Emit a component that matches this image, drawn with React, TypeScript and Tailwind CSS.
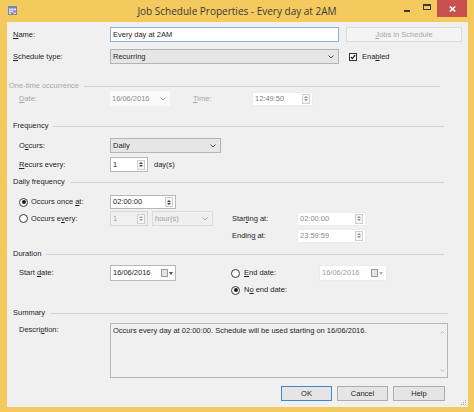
import React from "react";

function Chevron({ color = "#4a4a4a" }: { color?: string }) {
  return (
    <svg width="6" height="4" viewBox="0 0 6 4">
      <path d="M0.5 0.5 L3 3 L5.5 0.5" fill="none" stroke={color} strokeWidth="1" />
    </svg>
  );
}

function SpinArrows({ color = "#404040" }: { color?: string }) {
  return (
    <div className="flex flex-col items-center justify-center gap-[1px] w-[8px] h-[10px] border border-[#cfcfcf] bg-[#f6f6f6]">
      <svg width="4" height="2" viewBox="0 0 4 2">
        <path d="M0 2 L2 0 L4 2Z" fill={color} />
      </svg>
      <svg width="4" height="2" viewBox="0 0 4 2">
        <path d="M0 0 L2 2 L4 0Z" fill={color} />
      </svg>
    </div>
  );
}

function Radio({ checked }: { checked?: boolean }) {
  return (
    <div className="w-[9px] h-[9px] rounded-full border border-[#3a3a3a] bg-white flex items-center justify-center shrink-0">
      {checked && <div className="w-[4px] h-[4px] rounded-full bg-[#1a1a1a]" />}
    </div>
  );
}

function CalIcon({ color = "#8a8a8a" }: { color?: string }) {
  return (
    <div className="flex items-center gap-[1px]">
      <div className="w-[7px] h-[8px] border border-[#9a9a9a] bg-[#e4e4e4]" />
      <svg width="4" height="3" viewBox="0 0 4 3">
        <path d="M0 0 L2 3 L4 0Z" fill={color} />
      </svg>
    </div>
  );
}

function GroupHeader({
  label,
  disabled,
  pl,
  pr,
  mt,
}: {
  label: string;
  disabled?: boolean;
  pl: string;
  pr: string;
  mt: string;
}) {
  return (
    <div className={`flex items-center h-[10px] ${pl} ${pr} ${mt}`}>
      <span className={disabled ? "text-[#a8a8a8]" : "text-[#1e1e1e]"}>{label}</span>
      <div className="flex-1 h-px bg-[#d3d3d3] ml-[5px]" />
    </div>
  );
}

export default function App() {
  return (
    <div className="w-[474px] h-[412px] bg-[#f4c95e] flex flex-col font-['Liberation_Sans',Arial,sans-serif] text-[7.5px] leading-none text-[#1e1e1e] overflow-hidden">
      {/* Title bar */}
      <div className="grid grid-cols-[1fr_auto_1fr] h-[22px] shrink-0">
        <div className="flex items-start pl-[8px] pt-[6px]">
          <svg width="9" height="9" viewBox="0 0 9 9">
            <rect x="0.5" y="0.5" width="8" height="8" fill="#dfe8f5" stroke="#6f86b8" />
            <rect x="0.5" y="0.5" width="8" height="2" fill="#6f86b8" />
            <path d="M3 2.5 V8.5 M5.5 2.5 V8.5 M0.5 4.5 H8.5 M0.5 6.5 H8.5" stroke="#8fa2c9" strokeWidth="0.6" />
            <rect x="5.7" y="4.7" width="2" height="1.6" fill="#d9534f" />
            <rect x="3.2" y="6.7" width="2" height="1.6" fill="#d9534f" />
          </svg>
        </div>
        <div className="flex items-center justify-center font-['Open_Sans',sans-serif] text-[10px] text-[#3a3a3a] pb-[1px]">
          Job Schedule Properties - Every day at 2AM
        </div>
        <div className="flex justify-end items-start pr-[7px]">
          <div className="w-[16px] h-[17px] flex items-center justify-center mr-[4px]">
            <div className="w-[6px] h-[2px] bg-[#3a3a3a] mt-[4px]" />
          </div>
          <div className="w-[16px] h-[14px] flex items-center justify-center mr-[2px]">
            <div className="w-[8px] h-[6px] border border-[#3a3a3a] border-t-2" />
          </div>
          <div className="w-[30px] h-[17px] bg-[#c9504f] flex items-center justify-center">
            <svg width="7" height="6" viewBox="0 0 7 6">
              <path d="M0.8 0.5 L6.2 5.5 M6.2 0.5 L0.8 5.5" stroke="white" strokeWidth="1.6" />
            </svg>
          </div>
        </div>
      </div>

      {/* Content */}
      <div className="relative flex flex-col ml-[7px] mr-[6px] h-[385px] bg-[#f0f0f0] pt-[5px]">
        {/* Name */}
        <div className="flex items-center h-[15px]">
          <div className="w-[103px] pl-[6px]">
            <u>N</u>ame:
          </div>
          <div className="w-[229px] h-[15px] bg-white border border-[#8eb1dc] flex items-center pl-[2px]">
            Every day at 2AM
          </div>
          <div className="ml-[7px] w-[116px] h-[15px] bg-[#f4f4f4] border border-[#dcdcdc] flex items-center justify-center text-[#a8a8a8]">
            <span>
              <u>J</u>obs in Schedule
            </span>
          </div>
        </div>

        {/* Schedule type */}
        <div className="flex items-center h-[15px] mt-[7px]">
          <div className="w-[103px] pl-[6px]">
            <u>S</u>chedule type:
          </div>
          <div className="w-[229px] h-[15px] bg-[#e6e6e6] border border-[#b4b4b4] flex items-center justify-between pl-[2px] pr-[4px]">
            <span>Recurring</span>
            <Chevron />
          </div>
          <div className="ml-[10px] w-[8px] h-[8px] border border-[#333] bg-white flex items-center justify-center">
            <svg width="6" height="6" viewBox="0 0 6 6">
              <path d="M0.8 3 L2.3 4.6 L5.2 1" fill="none" stroke="#1a1a1a" strokeWidth="1.2" />
            </svg>
          </div>
          <span className="ml-[5px]">
            Ena<u>b</u>led
          </span>
        </div>

        {/* One-time occurrence */}
        <GroupHeader label="One-time occurrence" disabled pl="pl-[2px]" pr="pr-[28px]" mt="mt-[17px]" />
        <div className="flex items-center h-[15px]">
          <div className="w-[103px] pl-[12px] text-[#a8a8a8]">
            <u>D</u>ate:
          </div>
          <div className="w-[60px] h-[15px] bg-[#fafafa] flex items-center justify-between pl-[2px] pr-[4px] text-[#8c8c8c]">
            <span>16/06/2016</span>
            <Chevron color="#a0a0a0" />
          </div>
          <div className="ml-[23px] w-[59px] text-[#a8a8a8]">
            <u>T</u>ime:
          </div>
          <div className="w-[61px] h-[14px] bg-white border border-[#ececec] flex items-center justify-between pl-[2px] pr-[2px] text-[#7c7c7c]">
            <span>12:49:50</span>
            <SpinArrows color="#909090" />
          </div>
        </div>

        {/* Frequency */}
        <GroupHeader label="Frequency" pl="pl-[6px]" pr="pr-[24px]" mt="mt-[15px]" />
        <div className="flex items-center h-[15px] mt-[7px]">
          <div className="w-[103px] pl-[12px]">
            O<u>c</u>curs:
          </div>
          <div className="w-[111px] h-[15px] bg-[#e6e6e6] border border-[#b4b4b4] flex items-center justify-between pl-[2px] pr-[4px]">
            <span>Daily</span>
            <Chevron />
          </div>
        </div>
        <div className="flex items-center h-[15px] mt-[4px]">
          <div className="w-[103px] pl-[12px]">
            <u>R</u>ecurs every:
          </div>
          <div className="w-[38px] h-[15px] bg-white border border-[#b8b8b8] flex items-center justify-between pl-[2px] pr-[2px]">
            <span>1</span>
            <SpinArrows />
          </div>
          <span className="ml-[6px]">day(s)</span>
        </div>

        {/* Daily frequency */}
        <GroupHeader label="Daily frequency" pl="pl-[6px]" pr="pr-[24px]" mt="mt-[5px]" />
        <div className="flex items-center h-[14px] mt-[8px]">
          <div className="w-[103px] pl-[12px] flex items-center">
            <Radio checked />
            <span className="ml-[3px]">
              Occurs once <u>a</u>t:
            </span>
          </div>
          <div className="w-[66px] h-[14px] bg-white border border-[#b8b8b8] flex items-center justify-between pl-[2px] pr-[2px]">
            <span>02:00:00</span>
            <SpinArrows />
          </div>
        </div>
        <div className="flex items-center h-[15px] mt-[2px]">
          <div className="w-[103px] pl-[12px] flex items-center">
            <Radio />
            <span className="ml-[3px]">
              Occurs e<u>v</u>ery:
            </span>
          </div>
          <div className="w-[38px] h-[15px] bg-[#f0f0f0] border border-[#d6d6d6] flex items-center justify-between pl-[2px] pr-[2px] text-[#a0a0a0]">
            <span>1</span>
            <SpinArrows color="#a0a0a0" />
          </div>
          <div className="ml-[4px] w-[61px] h-[15px] bg-[#efefef] border border-[#dcdcdc] flex items-center justify-between pl-[2px] pr-[4px] text-[#a0a0a0]">
            <span>hour(s)</span>
            <Chevron color="#b0b0b0" />
          </div>
          <div className="ml-[19px] w-[65px]">
            Star<u>t</u>ing at:
          </div>
          <div className="w-[69px] h-[14px] bg-white border border-[#ececec] flex items-center justify-between pl-[2px] pr-[2px] text-[#8a8a8a]">
            <span>02:00:00</span>
            <SpinArrows color="#909090" />
          </div>
        </div>
        <div className="flex items-center h-[15px] mt-[2px] pl-[225px]">
          <div className="w-[65px]">
            Endin<u>g</u> at:
          </div>
          <div className="w-[69px] h-[14px] bg-white border border-[#ececec] flex items-center justify-between pl-[2px] pr-[2px] text-[#8a8a8a]">
            <span>23:59:59</span>
            <SpinArrows color="#909090" />
          </div>
        </div>

        {/* Duration */}
        <GroupHeader label="Duration" pl="pl-[6px]" pr="pr-[24px]" mt="mt-[6px]" />
        <div className="flex items-center h-[16px] mt-[6px]">
          <div className="w-[103px] pl-[12px]">
            Start <u>d</u>ate:
          </div>
          <div className="w-[66px] h-[16px] bg-white border border-[#b8b8b8] flex items-center justify-between pl-[2px] pr-[2px]">
            <span>16/06/2016</span>
            <CalIcon color="#505050" />
          </div>
          <div className="ml-[55px] flex items-center w-[88px]">
            <Radio />
            <span className="ml-[4px]">
              <u>E</u>nd date:
            </span>
          </div>
          <div className="w-[68px] h-[16px] bg-white border border-[#ececec] flex items-center justify-between pl-[2px] pr-[3px] text-[#a0a0a0]">
            <span>16/06/2016</span>
            <CalIcon color="#b0b0b0" />
          </div>
        </div>
        <div className="flex items-center h-[14px] mt-[2px] pl-[224px]">
          <Radio checked />
          <span className="ml-[4px]">
            N<u>o</u> end date:
          </span>
        </div>

        {/* Summary */}
        <GroupHeader label="Summary" pl="pl-[6px]" pr="pr-[20px]" mt="mt-[11px]" />
        <div className="flex items-start h-[55px] mt-[5px]">
          <div className="w-[103px] pl-[12px] pt-[3px]">
            Descri<u>p</u>tion:
          </div>
          <div className="w-[338px] h-[55px] bg-[#f0f0f0] border border-[#b6b6b6] flex justify-between pl-[2px] pt-[3px]">
            <span>Occurs every day at 02:00:00. Schedule will be used starting on 16/06/2016.</span>
            <div className="flex flex-col justify-between items-center w-[10px] pt-[4px] pb-[5px]">
              <svg width="5" height="3" viewBox="0 0 5 3">
                <path d="M0.5 2.5 L2.5 0.5 L4.5 2.5" fill="none" stroke="#c2c2c2" strokeWidth="1" />
              </svg>
              <svg width="5" height="3" viewBox="0 0 5 3">
                <path d="M0.5 0.5 L2.5 2.5 L4.5 0.5" fill="none" stroke="#c2c2c2" strokeWidth="1" />
              </svg>
            </div>
          </div>
        </div>

        {/* Buttons */}
        <div className="flex items-center h-[15px] mt-[8px] pl-[274px]">
          <div className="w-[51px] h-[15px] bg-[#e5e5e5] border border-[#3d8ad2] flex items-center justify-center">
            OK
          </div>
          <div className="ml-[5px] w-[51px] h-[15px] bg-[#e5e5e5] border border-[#adadad] flex items-center justify-center">
            Cancel
          </div>
          <div className="ml-[5px] w-[52px] h-[15px] bg-[#e5e5e5] border border-[#adadad] flex items-center justify-center">
            Help
          </div>
        </div>

        {/* Resize grip */}
        <svg className="absolute right-[1px] bottom-[1px]" width="6" height="6" viewBox="0 0 6 6">
          <rect x="4" y="0" width="1" height="1" fill="#a8a8a8" />
          <rect x="2" y="2" width="1" height="1" fill="#a8a8a8" />
          <rect x="4" y="2" width="1" height="1" fill="#a8a8a8" />
          <rect x="0" y="4" width="1" height="1" fill="#a8a8a8" />
          <rect x="2" y="4" width="1" height="1" fill="#a8a8a8" />
          <rect x="4" y="4" width="1" height="1" fill="#a8a8a8" />
        </svg>
      </div>
    </div>
  );
}
